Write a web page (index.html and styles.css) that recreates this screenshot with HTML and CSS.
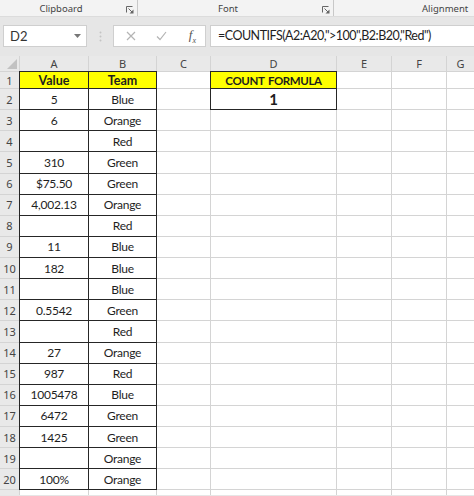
FILE: index.html
```
<!DOCTYPE html>
<html lang="en">

<head>
    <meta charset="UTF-8">
    <meta name="viewport" content="width=device-width, initial-scale=1.0">
    <title>COUNTIFS Example</title>
    <link rel="stylesheet" href="styles.css">
</head>

<body>
    <div class="ribbon">
        <div class="group group-clipboard">
            <span class="group-label">Clipboard</span>
            <svg class="launcher" width="8" height="8" viewBox="0 0 8 8">
                <path d="M0.5 6.5V0.5H6.5" fill="none" stroke="#666" stroke-width="1" />
                <path d="M2.5 2.5L6 6" stroke="#666" stroke-width="1" />
                <path d="M7.5 3.5V7.5H3.5Z" fill="#666" />
            </svg>
        </div>
        <div class="group group-font">
            <span class="group-label">Font</span>
            <svg class="launcher" width="8" height="8" viewBox="0 0 8 8">
                <path d="M0.5 6.5V0.5H6.5" fill="none" stroke="#666" stroke-width="1" />
                <path d="M2.5 2.5L6 6" stroke="#666" stroke-width="1" />
                <path d="M7.5 3.5V7.5H3.5Z" fill="#666" />
            </svg>
        </div>
        <div class="group group-alignment">
            <span class="group-label">Alignment</span>
        </div>
    </div>

    <div class="formula-bar">
        <div class="name-box">
            <span>D2</span>
            <svg class="caret" width="7" height="4" viewBox="0 0 7 4">
                <path d="M0 0H7L3.5 4Z" fill="#777" />
            </svg>
        </div>
        <div class="grip">
            <svg width="3" height="11" viewBox="0 0 3 11">
                <circle cx="1.5" cy="1.5" r="1" fill="#c4c4c4" />
                <circle cx="1.5" cy="5.5" r="1" fill="#c4c4c4" />
                <circle cx="1.5" cy="9.5" r="1" fill="#c4c4c4" />
            </svg>
        </div>
        <div class="fx-buttons">
            <svg class="btn-icon" width="10" height="10" viewBox="0 0 10 10">
                <path d="M1 1L9 9M9 1L1 9" stroke="#b4b4b4" stroke-width="1.2" />
            </svg>
            <svg class="btn-icon" width="11" height="10" viewBox="0 0 11 10">
                <path d="M1 5.5L4 8.5L10 1" fill="none" stroke="#b4b4b4" stroke-width="1.2" />
            </svg>
            <span class="fx"><i>f</i><sub>x</sub></span>
        </div>
        <div class="formula">=COUNTIFS(A2:A20,"&gt;100",B2:B20,"Red")</div>
    </div>

    <div class="sheet" id="sheet"></div>

    <script>
        const rows = [
            ['Value', 'Team', '', 'COUNT FORMULA'],
            ['5', 'Blue', '', '1'],
            ['6', 'Orange'],
            ['', 'Red'],
            ['310', 'Green'],
            ['$75.50', 'Green'],
            ['4,002.13', 'Orange'],
            ['', 'Red'],
            ['11', 'Blue'],
            ['182', 'Blue'],
            ['', 'Blue'],
            ['0.5542', 'Green'],
            ['', 'Red'],
            ['27', 'Orange'],
            ['987', 'Red'],
            ['1005478', 'Blue'],
            ['6472', 'Green'],
            ['1425', 'Green'],
            ['', 'Orange'],
            ['100%', 'Orange'],
            []
        ];
        const columns = ['A', 'B', 'C', 'D', 'E', 'F', 'G'];

        let html = '<div class="corner"><span class="corner-mark"></span></div>';
        columns.forEach(col => {
            html += '<div class="col-head">' + col + '</div>';
        });

        rows.forEach((row, r) => {
            html += '<div class="row-head">' + (r < 20 ? r + 1 : '') + '</div>';
            columns.forEach((col, c) => {
                let value = row[c] || '';
                let cls = 'cell';
                if ((c < 2 && r < 20) || (c == 3 && r < 2)) cls += ' boxed';
                if (r == 0 && value != '') cls += ' title';
                if (r == 0 && c == 3) cls += ' title-wide';
                if (r == 1 && c == 3) cls += ' result';
                html += '<div class="' + cls + '">' + value + '</div>';
            });
        });

        document.getElementById('sheet').innerHTML = html;
    </script>
</body>

</html>
```

FILE: styles.css
```
body {
    margin: 0;
    width: 474px;
    height: 496px;
    overflow: hidden;
    background-color: #e6e6e6;
    font-family: Lato, "Liberation Sans", sans-serif;
    color: #1e1e1e;
}

/* ribbon group labels */
.ribbon {
    display: flex;
    height: 16px;
    background-color: #f3f3f3;
    border-bottom: 1px solid #dcdcdc;
    font-family: "Noto Sans", sans-serif;
    font-size: 9.5px;
    color: #444;
}

.group {
    display: flex;
    align-items: center;
    border-right: 1px solid #c8c8c8;
}

.group-clipboard {
    width: 137px;
}

.group-font {
    width: 195px;
}

.group-alignment {
    flex: 1;
    border-right: 0px;
    padding-left: 88px;
}

.group-clipboard .group-label,
.group-font .group-label {
    flex: 1;
    text-align: center;
}

.launcher {
    margin: 4px 3px 0px 4px;
}

/* name box + formula */
.formula-bar {
    display: flex;
    align-items: flex-start;
    height: 39px;
    padding: 8px 0px 0px 3px;
    box-sizing: border-box;
}

.name-box {
    display: flex;
    align-items: center;
    width: 84px;
    height: 22px;
    padding: 0px 5px 0px 6px;
    box-sizing: border-box;
    background-color: #fff;
    border: 1px solid #cfcfcf;
    font-size: 13px;
    color: #333;
}

.caret {
    margin-left: auto;
}

.grip {
    display: flex;
    align-items: center;
    justify-content: center;
    width: 26px;
    height: 22px;
}

.fx-buttons {
    display: flex;
    align-items: center;
    width: 93px;
    height: 22px;
    padding: 0px 9px 0px 12px;
    box-sizing: border-box;
    background-color: #fff;
    border: 1px solid #cfcfcf;
    gap: 20px;
}

.fx {
    margin-left: auto;
    font-family: "Liberation Serif", serif;
    font-size: 13px;
    color: #555;
}

.fx sub {
    font-size: 8px;
    font-style: italic;
}

.formula {
    flex: 1;
    height: 22px;
    margin-left: 4px;
    padding-left: 7px;
    box-sizing: border-box;
    background-color: #fff;
    border: 1px solid #cfcfcf;
    border-right: 0px;
    font-size: 12.5px;
    letter-spacing: -0.5px;
    line-height: 20px;
    white-space: nowrap;
}

/* worksheet grid */
.sheet {
    display: grid;
    grid-template-columns: 19px 68px 67px 53px 125px 54px 54px 1fr;
    grid-template-rows: 15px 16px repeat(19, 20.13px) 5px;
    gap: 1px;
    background-color: #d4d4d4;
    font-size: 12px;
    letter-spacing: -0.25px;
}

.corner,
.col-head,
.row-head {
    display: flex;
    align-items: center;
    justify-content: center;
    background-color: #e9e9e9;
    font-family: "Noto Sans", sans-serif;
    font-size: 11px;
    letter-spacing: 0px;
    color: #444;
}

.corner {
    position: relative;
}

.corner-mark {
    position: absolute;
    right: 2px;
    bottom: 2px;
    width: 0px;
    height: 0px;
    border-left: 10px solid transparent;
    border-bottom: 10px solid #c2c2c2;
}

.cell {
    display: flex;
    align-items: center;
    justify-content: center;
    background-color: #fff;
    white-space: nowrap;
}

.boxed {
    box-shadow: 0px 0px 0px 1px #262626;
}

.title {
    background-color: #ffff00;
    font-size: 12.5px;
    font-weight: bold;
    letter-spacing: 0px;
}

.title-wide {
    font-size: 11.5px;
    letter-spacing: -0.4px;
    word-spacing: 1.5px;
}

.result {
    font-size: 15px;
    font-weight: bold;
}
```
